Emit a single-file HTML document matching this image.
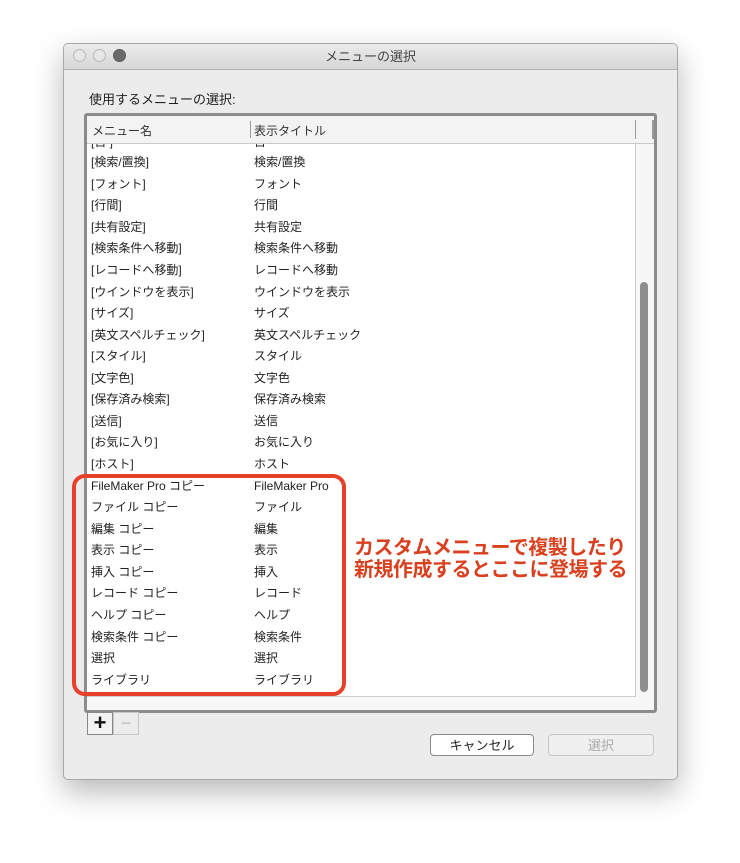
<!DOCTYPE html>
<html><head><meta charset="utf-8"><style>
body{margin:0;width:740px;height:863px;background:#fff;position:relative;overflow:hidden;font-family:"Liberation Sans","Noto Sans CJK JP",sans-serif;}
.win{position:absolute;left:63px;top:43px;width:613px;height:735px;background:#ececec;border:1px solid #a8a8a8;border-radius:5px;box-shadow:0 12px 30px rgba(0,0,0,.28);overflow:hidden}
.tb{position:absolute;left:0;top:0;right:0;height:25px;background:linear-gradient(#ebebeb,#d6d6d6);border-bottom:1px solid #b5b5b5;text-align:center;font-size:13px;line-height:25px;color:#444}
.dot{position:absolute;top:5px;width:13px;height:13px;border-radius:50%;border:1px solid #b8b8b8;background:#e6e6e6;box-sizing:border-box}
.lbl{position:absolute;left:25px;top:45px;font-size:13px;color:#222}
.frame{position:absolute;left:20px;top:69px;width:573px;height:600px;border:3px solid #8c8c8c;border-radius:3px;background:#f7f7f7;box-sizing:border-box}
.hdr{position:absolute;left:0;top:0;width:567px;height:27px;background:#f3f3f3;border-bottom:1px solid #c8c8c8;font-size:12px;color:#333}
.list{position:absolute;left:0;top:28px;width:548px;height:552px;background:#fff;border-right:1px solid #ccc;border-bottom:1px solid #ccc;overflow:hidden}
.r{position:absolute;left:4px;font-size:12px;line-height:16px;height:16px;color:#222;white-space:nowrap;margin-top:-2px}
.r span{position:absolute;left:163px;top:0}
.thumb{position:absolute;left:553px;top:166px;width:8px;height:410px;border-radius:4px;background:#8e8e8e}
.red{position:absolute;left:72px;top:474px;width:274px;height:222px;border:4px solid #e8412a;border-radius:13px;box-sizing:border-box}
.rt{position:absolute;left:354px;top:537px;font-size:20px;font-weight:bold;color:#d9401f;line-height:22px;letter-spacing:-0.5px;white-space:nowrap}
.btn{position:absolute;height:22px;border-radius:4px;font-size:13px;text-align:center;line-height:21px;box-sizing:border-box}
</style></head><body>
<div class="win">
<div class="tb">メニューの選択</div>
<div class="dot" style="left:9px"></div><div class="dot" style="left:29px"></div><div class="dot" style="left:49px;background:#6a6a6a;border-color:#5a5a5a"></div>
<div class="lbl">使用するメニューの選択:</div>
<div class="frame">
<div class="hdr"><span style="position:absolute;left:5px;top:6px">メニュー名</span><div style="position:absolute;left:163px;top:5px;width:1px;height:17px;background:#999"></div><span style="position:absolute;left:167px;top:6px">表示タイトル</span><div style="position:absolute;left:548px;top:4px;width:1px;height:19px;background:#999"></div><div style="position:absolute;left:565px;top:4px;width:2px;height:19px;background:#999"></div></div>
<div class="list">
<div class="r" style="top:-8px">[日 ]<span>日 </span></div>
<div class="r" style="top:12px">[検索/置換]<span>検索/置換</span></div>
<div class="r" style="top:34px">[フォント]<span>フォント</span></div>
<div class="r" style="top:55px">[行間]<span>行間</span></div>
<div class="r" style="top:77px">[共有設定]<span>共有設定</span></div>
<div class="r" style="top:98px">[検索条件へ移動]<span>検索条件へ移動</span></div>
<div class="r" style="top:120px">[レコードへ移動]<span>レコードへ移動</span></div>
<div class="r" style="top:142px">[ウインドウを表示]<span>ウインドウを表示</span></div>
<div class="r" style="top:163px">[サイズ]<span>サイズ</span></div>
<div class="r" style="top:185px">[英文スペルチェック]<span>英文スペルチェック</span></div>
<div class="r" style="top:206px">[スタイル]<span>スタイル</span></div>
<div class="r" style="top:228px">[文字色]<span>文字色</span></div>
<div class="r" style="top:249px">[保存済み検索]<span>保存済み検索</span></div>
<div class="r" style="top:271px">[送信]<span>送信</span></div>
<div class="r" style="top:292px">[お気に入り]<span>お気に入り</span></div>
<div class="r" style="top:314px">[ホスト]<span>ホスト</span></div>
<div class="r" style="top:336px">FileMaker Pro コピー<span>FileMaker Pro</span></div>
<div class="r" style="top:357px">ファイル コピー<span>ファイル</span></div>
<div class="r" style="top:379px">編集 コピー<span>編集</span></div>
<div class="r" style="top:400px">表示 コピー<span>表示</span></div>
<div class="r" style="top:422px">挿入 コピー<span>挿入</span></div>
<div class="r" style="top:443px">レコード コピー<span>レコード</span></div>
<div class="r" style="top:465px">ヘルプ コピー<span>ヘルプ</span></div>
<div class="r" style="top:487px">検索条件 コピー<span>検索条件</span></div>
<div class="r" style="top:508px">選択<span>選択</span></div>
<div class="r" style="top:530px">ライブラリ<span>ライブラリ</span></div>
</div>
<div class="thumb"></div>
</div>
<div style="position:absolute;left:23px;top:668px;width:26px;height:23px;border:1px solid #888;background:#f2f2f2;box-sizing:border-box;font-size:22px;font-weight:bold;text-align:center;line-height:20px;color:#111">+</div>
<div style="position:absolute;left:49px;top:668px;width:26px;height:23px;border:1px solid #c8c8c8;background:#ececec;box-sizing:border-box;font-size:18px;text-align:center;line-height:20px;color:#bbb">−</div>
<div class="btn" style="left:366px;top:690px;width:104px;background:#fff;border:1px solid #8a8a8a;color:#222">キャンセル</div>
<div class="btn" style="left:484px;top:690px;width:106px;background:#f0f0f0;border:1px solid #c6c6c6;color:#aaa">選択</div>
</div>
<div class="red"></div>
<div class="rt">カスタムメニューで複製したり<br>新規作成するとここに登場する</div>
</body></html>
